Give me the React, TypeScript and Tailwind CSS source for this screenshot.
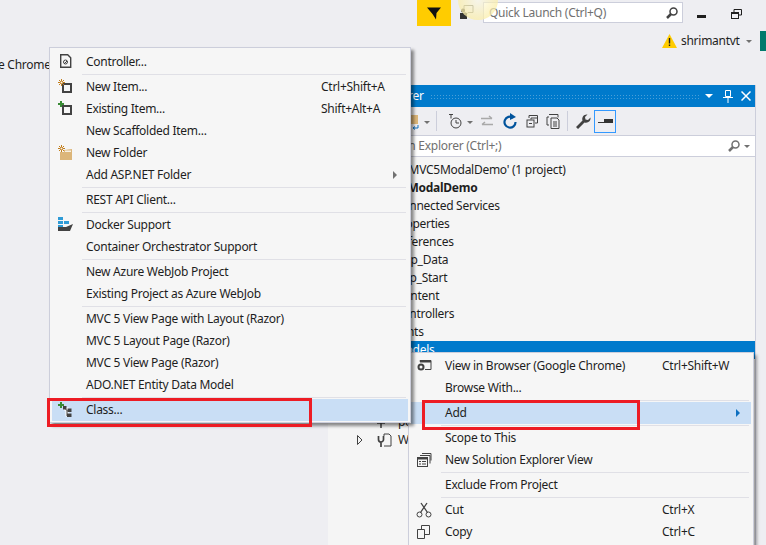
import React from "react";

type Row = { t: string; s?: string; i?: React.ReactNode; arrow?: boolean; sep?: boolean; hi?: boolean };

const Doc = () => (
  <svg width="16" height="16" viewBox="0 0 16 16" fill="none">
    <path d="M2.700.700h7l3 3v9.600H2.700z" stroke="#424242" strokeWidth="1.400" />
    <circle cx="7.500" cy="8" r="2" stroke="#424242" />
    <path d="M6 10l3-3" stroke="#424242" />
  </svg>
);
const Star = () => (
  <g>
    <path d="M3.500 0v7M0 3.500h7M1 1l5 5M6 1l-5 5" stroke="#c27d1a" strokeWidth="1" />
    <circle cx="3.500" cy="3.500" r="1.300" fill="#f6f6f6" stroke="#c27d1a" strokeWidth=".8" />
  </g>
);
const NewItem = () => (
  <svg width="16" height="16" viewBox="0 0 16 16" fill="none">
    <rect x="5" y="5" width="8" height="8" stroke="#424242" strokeWidth="2" fill="#f6f6f6" />
    <Star />
  </svg>
);
const ExistingItem = () => (
  <svg width="16" height="16" viewBox="0 0 16 16" fill="none">
    <rect x="5" y="5" width="8" height="8" stroke="#424242" strokeWidth="2" fill="#f6f6f6" />
    <path d="M3 0v6M0 3h6" stroke="#388a34" strokeWidth="2" />
  </svg>
);
const NewFolder = () => (
  <svg width="16" height="16" viewBox="0 0 16 16" fill="none">
    <path d="M2 7h4V5l8-1v11H2z" fill="#dcb67a" />
    <path d="M7 5.500h6v1.500H7z" fill="#f6f0e4" />
    <Star />
  </svg>
);
const Docker = () => (
  <svg width="16" height="16" viewBox="0 0 16 16" fill="none">
    <path d="M0 0h5v3H0zM0 4h5v3H0zM0 8h5v2H0zM6 4h5v3H6z" fill="#2f9bd6" />
    <path d="M0 10h8l7-3-3 7H0z" fill="#424242" />
  </svg>
);
const ClassIcon = () => (
  <svg width="16" height="16" viewBox="0 0 16 16" fill="none">
    <path d="M3 0v6M0 3h6" stroke="#388a34" strokeWidth="2" />
    <path d="M6 7h3v6h3" stroke="#fff" strokeWidth="3" />
    <path d="M6 5.500L9 8.500M9 8v6" stroke="#424242" strokeWidth="1" />
    <rect x="5" y="4" width="3.500" height="3.500" fill="#424242" />
    <rect x="9.500" y="6.500" width="4" height="3.500" fill="#424242" />
    <rect x="9" y="11.500" width="4.500" height="3.500" fill="#424242" />
  </svg>
);
const Globe = () => (
  <svg width="16" height="16" viewBox="0 0 16 16" fill="none">
    <path d="M4 3.500V2.500h11v9H9" stroke="#424242" />
    <path d="M4 3.500h11" stroke="#424242" strokeWidth="2" />
    <circle cx="5" cy="9" r="3.500" fill="#424242" />
    <circle cx="5" cy="9" r="1.500" fill="#f6f6f6" />
  </svg>
);
const NewView = () => (
  <svg width="16" height="16" viewBox="0 0 16 16" fill="none">
    <rect x="1.500" y="5.500" width="10" height="9" stroke="#424242" fill="#f6f6f6" />
    <path d="M1.500 6.500h10" stroke="#424242" strokeWidth="2" />
    <path d="M4 3.500h10v8M6 1.500h9v7" stroke="#424242" />
    <path d="M3 9.500h2M6 9.500h4M3 12h2M6 12h4" stroke="#424242" />
  </svg>
);
const Cut = () => (
  <svg width="16" height="16" viewBox="0 0 16 16" fill="none">
    <circle cx="3.500" cy="12.500" r="2.500" stroke="#424242" />
    <circle cx="12.500" cy="12.500" r="2.500" stroke="#424242" />
    <path d="M4.500 10.500L11 1M11.500 10.500L5 1" stroke="#424242" strokeWidth="1.300" />
  </svg>
);
const Copy = () => (
  <svg width="16" height="16" viewBox="0 0 16 16" fill="none">
    <path d="M1.500 5.500h7v9h-7zM5.500 5V1.500h8v9h-5" stroke="#424242" />
  </svg>
);
const Search = ({ color }: { color: string }) => (
  <svg width="14" height="14" viewBox="0 0 14 14" fill="none">
    <circle cx="8.500" cy="5.500" r="3.500" stroke={color} strokeWidth="1.500" />
    <path d="M6 8l-4 4" stroke={color} strokeWidth="2.500" />
  </svg>
);

const leftMenu: Row[] = [
  { t: "Controller...", i: <Doc /> },
  { t: "", sep: true },
  { t: "New Item...", s: "Ctrl+Shift+A", i: <NewItem /> },
  { t: "Existing Item...", s: "Shift+Alt+A", i: <ExistingItem /> },
  { t: "New Scaffolded Item..." },
  { t: "New Folder", i: <NewFolder /> },
  { t: "Add ASP.NET Folder", arrow: true },
  { t: "", sep: true },
  { t: "REST API Client..." },
  { t: "", sep: true },
  { t: "Docker Support", i: <Docker /> },
  { t: "Container Orchestrator Support" },
  { t: "", sep: true },
  { t: "New Azure WebJob Project" },
  { t: "Existing Project as Azure WebJob" },
  { t: "", sep: true },
  { t: "MVC 5 View Page with Layout (Razor)" },
  { t: "MVC 5 Layout Page (Razor)" },
  { t: "MVC 5 View Page (Razor)" },
  { t: "ADO.NET Entity Data Model" },
  { t: "", sep: true },
  { t: "Class...", i: <ClassIcon />, hi: true },
];

const rightMenu: Row[] = [
  { t: "View in Browser (Google Chrome)", s: "Ctrl+Shift+W", i: <Globe /> },
  { t: "Browse With..." },
  { t: "", sep: true },
  { t: "Add", arrow: true, hi: true },
  { t: "", sep: true },
  { t: "Scope to This" },
  { t: "New Solution Explorer View", i: <NewView /> },
  { t: "", sep: true },
  { t: "Exclude From Project" },
  { t: "", sep: true },
  { t: "Cut", s: "Ctrl+X", i: <Cut /> },
  { t: "Copy", s: "Ctrl+C", i: <Copy /> },
];

function MenuRows({ rows, shortcutClass, iconClass }: { rows: Row[]; shortcutClass: string; iconClass: string }) {
  return (
    <>
      {rows.map((r, k) =>
        r.sep ? (
          <div key={k} className="h-[3px] pl-[30px] pr-[2px] flex items-center">
            <div className="h-px w-full bg-[#e0e0e6]" />
          </div>
        ) : (
          <div
            key={k}
            className={`h-[22px] flex items-center relative text-[12px] text-[#1e1e1e] ${r.hi ? "bg-[#c9def5]" : ""}`}
          >
            <div className={`w-[34px] shrink-0 flex ${iconClass}`}>{r.i}</div>
            <div className="flex-1 whitespace-nowrap">{r.t}</div>
            {r.s && <div className={`whitespace-nowrap ${shortcutClass}`}>{r.s}</div>}
            {r.arrow && (
              <div className={`absolute right-[11px] top-[7px] w-0 h-0 border-y-[4px] border-y-transparent border-l-[4px] ${r.hi ? "border-l-[#0e70c0]" : "border-l-[#717171]"}`} />
            )}
          </div>
        ),
      )}
    </>
  );
}

const tree = [
  { t: "Solution 'MVC5ModalDemo' (1 project)", c: "pl-[31px]" },
  { t: "MVC5ModalDemo", c: "pl-[47px] font-bold" },
  { t: "Connected Services", c: "pl-[67px]" },
  { t: "Properties", c: "pl-[66px]" },
  { t: "References", c: "pl-[66px]" },
  { t: "App_Data", c: "pl-[68px]" },
  { t: "App_Start", c: "pl-[67px]" },
  { t: "Content", c: "pl-[68px]" },
  { t: "Controllers", c: "pl-[67px]" },
  { t: "Fonts", c: "pl-[66px]" },
];

function Caret({ className = "" }: { className?: string }) {
  return <div className={`w-0 h-0 border-x-[3px] border-x-transparent border-t-[3px] border-t-[#717171] ${className}`} />;
}

export default function App() {
  return (
    <div className="relative w-[766px] h-[545px] overflow-hidden bg-[#eeeef2] text-[#1e1e1e] font-['Noto_Sans','Open_Sans',sans-serif] text-[12px] tracking-[-0.27px] flex flex-col">
      {/* title bar */}
      <div className="h-[31px] shrink-0 flex items-start pl-[417px]">
        <div className="w-[34px] h-[26px] bg-[#ffcc00] flex items-center justify-center">
          <svg width="14" height="14" viewBox="0 0 14 14"><path d="M0 1.500h14L9.500 7 9 13.500 5.500 8z" fill="#111" /></svg>
        </div>
        <svg className="ml-[7px] mt-[4px]" width="18" height="16" viewBox="0 0 18 16" fill="none">
          <path d="M6 1.500h9v7H10l-2 2v-2H6z" stroke="#8a8a80" />
          <rect x="2" y="9" width="7" height="6" fill="#333" />
          <circle cx="5" cy="6.500" r="2" fill="#333" />
        </svg>
        <div className="ml-[7px] mt-[2px] w-[200px] h-[21px] bg-white border border-[#cccedb] flex items-center justify-between pl-[5px] pr-[3px] pt-[1px] text-[#717171]">
          Quick Launch (Ctrl+Q)
          <Search color="#424242" />
        </div>
        <div className="ml-[14px] mt-[15px] w-[9px] h-[3px] bg-[#1e1e1e]" />
        <svg className="ml-[25px] mt-[9px]" width="11" height="11" viewBox="0 0 11 11" fill="none">
          <path d="M3 3V.500h7.500V6H8" stroke="#1e1e1e" />
          <rect x=".500" y="3.500" width="7" height="6" stroke="#1e1e1e" />
          <path d="M0 4h8" stroke="#1e1e1e" strokeWidth="2" />
        </svg>
      </div>
      <div className="h-[20px] shrink-0 flex items-center pl-[662px]">
        <svg width="15" height="14" viewBox="0 0 15 14">
          <path d="M7.500 0L15 14H0z" fill="#ffcc00" />
          <path d="M6.800 4h1.400v5.500H6.800zM6.800 10.500h1.400V12H6.800z" fill="#1e1e1e" />
        </svg>
        <span className="ml-[4px] w-[65px]">shrimantvt</span>
        <Caret />
        <div className="ml-[8px] w-[6px] h-[20px] bg-[#007a6c]" />
      </div>
      <div className="mt-[4px] h-[20px] leading-[20px] whitespace-nowrap -ml-[2px]">e Chrome</div>

      {/* cursor highlight over the title bar */}
      <div className="absolute left-[458px] top-[-20px] w-[40px] h-[40px] rounded-full bg-[radial-gradient(circle,rgba(255,252,225,0.45),rgba(249,235,160,0.9))]" />

      {/* solution explorer panel */}
      <div className="absolute left-[328px] top-[85px] w-[428px] h-[460px] flex flex-col bg-[#f5f5f5] border-r border-[#cccedb]">
        <div className="h-[22px] shrink-0 bg-[#007acc] text-white flex items-center pl-[80px] pr-[4px]">
          <span className="w-[22px]">rer</span>
          <div className="flex-1 h-[5px] bg-[radial-gradient(#4a9fd8_1px,transparent_1px)] bg-[length:3px_3px]" />
          <div className="ml-[6px] w-0 h-0 border-x-[4px] border-x-transparent border-t-[4px] border-t-white" />
          <svg className="ml-[10px]" width="10" height="14" viewBox="0 0 10 14" fill="none">
            <path d="M2.500 1.500h5v6h-5zM0 8.500h10M5 9v5" stroke="#fff" />
          </svg>
          <svg className="ml-[8px]" width="10" height="10" viewBox="0 0 10 10" fill="none">
            <path d="M.500.500l9 9M9.500.500l-9 9" stroke="#fff" strokeWidth="1.500" />
          </svg>
        </div>
        <div className="h-[28px] shrink-0 bg-[#eeeef2] flex items-center pl-[83px]">
          <svg width="10" height="17" viewBox="0 0 10 17" fill="none">
            <path d="M0 2h7v9H0z" fill="#dcb67a" />
            <path d="M7 12v3H2M4 13.500L2 15l2 1.500" stroke="#0e70c0" />
          </svg>
          <Caret className="ml-[3px] mt-[2px]" />
          <div className="ml-[6px] w-px h-[20px] bg-[#cccedb]" />
          <svg className="ml-[11px]" width="16" height="17" viewBox="0 0 16 17" fill="none">
            <circle cx="8" cy="10" r="5" stroke="#424242" />
            <path d="M8 7v3h3M1 1.500h4M3 1.500v4" stroke="#424242" />
          </svg>
          <Caret className="ml-[3px] mt-[2px]" />
          <svg className="ml-[8px]" width="12" height="13" viewBox="0 0 12 13" fill="none">
            <path d="M0 3.500h11M8 1l3 2.500M12 9.500H1M4 7l-3 2.500" stroke="#a9a9a9" strokeWidth="1.500" />
          </svg>
          <svg className="ml-[10px]" width="14" height="16" viewBox="0 0 14 16" fill="none">
            <path d="M10 4.500A5.500 5.500 0 1 0 12.500 9" stroke="#00539c" strokeWidth="2.200" />
            <path d="M7 0l6 4-6 3z" fill="#00539c" />
          </svg>
          <svg className="ml-[9px]" width="12" height="13" viewBox="0 0 12 13" fill="none">
            <path d="M3 3V.500h8.500V8H9M5 4.500V3h6" stroke="#424242" />
            <rect x="1" y="5" width="7" height="7" stroke="#424242" />
            <path d="M3 8.500h3" stroke="#424242" />
          </svg>
          <svg className="ml-[8px]" width="14" height="15" viewBox="0 0 14 15" fill="none">
            <path d="M3 3h-2v8h2M3 .500h9v3M5 4h6l2 2v8.500H5z" stroke="#424242" />
            <path d="M7 8h4M7 10h4M7 12h4" stroke="#424242" />
          </svg>
          <div className="ml-[7px] w-px h-[20px] bg-[#cccedb]" />
          <svg className="ml-[8px]" width="15" height="15" viewBox="0 0 15 15" fill="none">
            <path d="M0 13l6.500-6.500C5.500 3 8 0 11.500 0.500L9 3l.5 2.500L12 6l2.500-2.500C15 7 12 9.500 8.500 8.500L2 15z" fill="#424242" />
          </svg>
          <div className="ml-[3px] w-[22px] h-[23px] border border-[#3399ff] flex items-center justify-center">
            <svg width="15" height="6" viewBox="0 0 15 6"><path d="M0 4h6V1h9v4H0z" fill="#333" /></svg>
          </div>
        </div>
        <div className="h-[22px] shrink-0 bg-white border-y border-[#cccedb] flex items-center pl-[4px] pr-[5px] text-[#717171] whitespace-nowrap">
          <span className="flex-1">Search Solution Explorer (Ctrl+;)</span>
          <Search color="#717171" />
          <Caret className="ml-[3px]" />
        </div>
        <div className="flex-1 flex flex-col pt-[4px] overflow-hidden">
          {tree.map((r) => (
            <div key={r.t} className={`h-[18px] leading-[18px] whitespace-nowrap shrink-0 ${r.c}`}>
              {r.t}
            </div>
          ))}
          <div className="h-[18px] shrink-0 bg-[#007acc] text-white leading-[18px] pl-[67px]">Models</div>
          <div className="h-[54px] shrink-0" />
          <div className="h-[18px] shrink-0 flex items-center pl-[49px]">
            <svg width="14" height="15" viewBox="0 0 14 15" fill="none">
              <path d="M4 1H13M0 8h8M4 8v5" stroke="#424242" strokeWidth="1.500" />
            </svg>
            <span className="ml-[7px]">pe</span>
          </div>
          <div className="h-[18px] shrink-0 flex items-center pl-[29px]">
            <svg width="6" height="10" viewBox="0 0 6 10" fill="none">
              <path d="M.500.500v9L5 5z" stroke="#424242" />
            </svg>
            <svg className="ml-[14px]" width="15" height="15" viewBox="0 0 15 15" fill="none">
              <path d="M7 3V1h5l2 2v10H7" stroke="#424242" />
              <path d="M1.500 3v3.500a2.500 2.500 0 0 0 5 0V3M4 9v5" stroke="#424242" strokeWidth="1.700" />
            </svg>
            <span className="ml-[6px]">W</span>
          </div>
        </div>
      </div>

      {/* right context menu */}
      <div className="absolute left-[408px] top-[352px] w-[346px] h-[200px] bg-[#f6f6f6] border border-[#cccedb] shadow-[3px_3px_3px_rgba(0,0,0,0.35)] pt-[2px] px-[2px]">
        <MenuRows rows={rightMenu} shortcutClass="w-[89px]" iconClass="pl-[5px]" />
      </div>
      <div className="absolute left-[422px] top-[400px] w-[218px] h-[30px] border-[3px] border-[#ed1c24]" />

      {/* left context menu */}
      <div className="absolute left-[49px] top-[47px] w-[362px] h-[376px] bg-[#f6f6f6] border border-[#cccedb] shadow-[3px_3px_3px_rgba(0,0,0,0.45)] pt-[3px] px-[2px]">
        <MenuRows rows={leftMenu} shortcutClass="w-[87px]" iconClass="pl-[6px]" />
      </div>
      <div className="absolute left-[47px] top-[398px] w-[265px] h-[29px] border-[3px] border-[#ed1c24]" />
    </div>
  );
}
